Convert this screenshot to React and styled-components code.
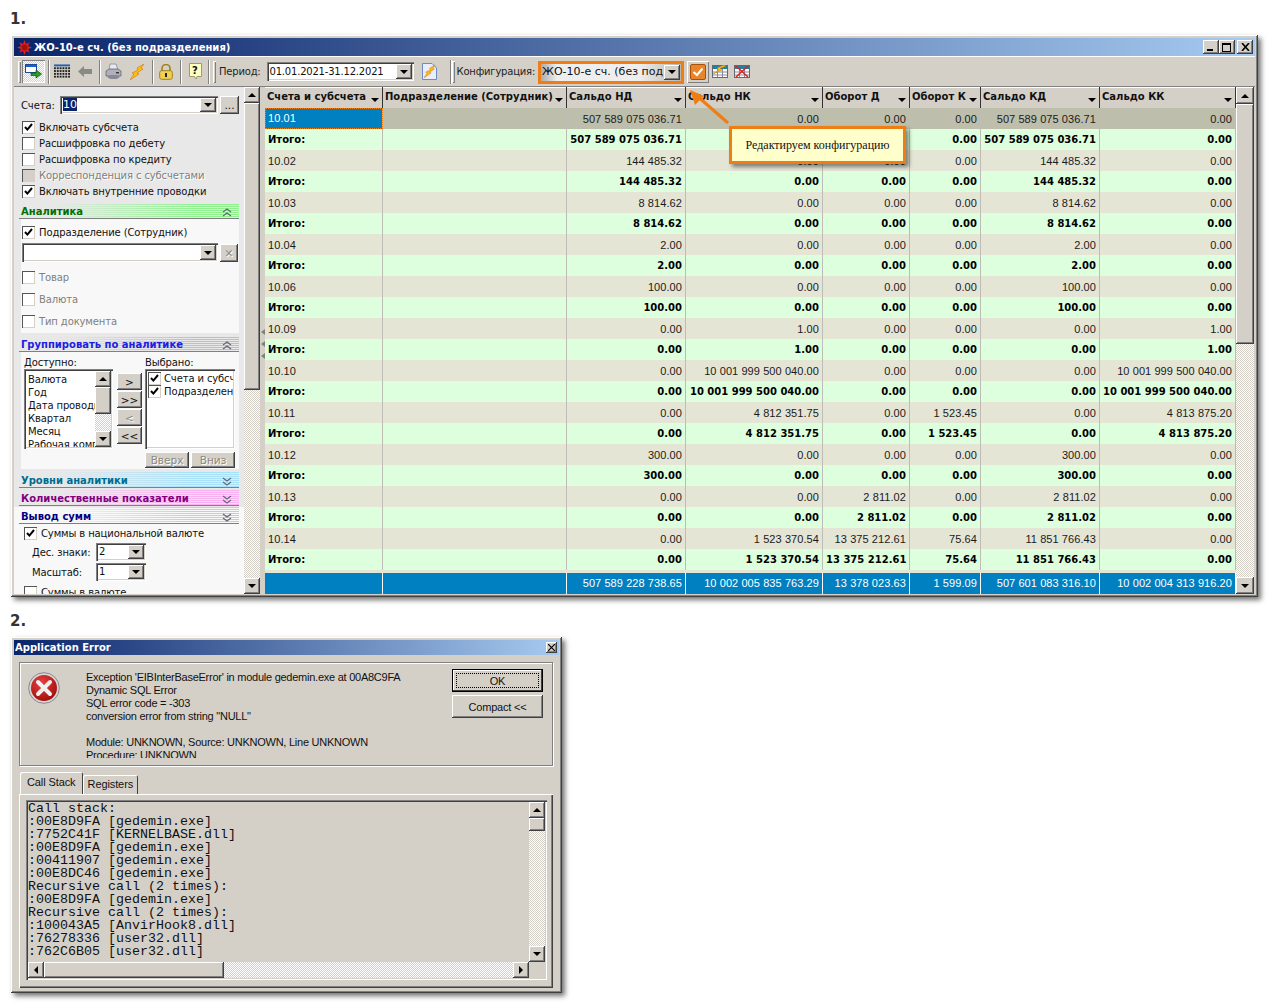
import React from 'react';
import styled, { createGlobalStyle, css } from 'styled-components';

const Global = createGlobalStyle`
  html, body { margin: 0; padding: 0; background: #fff; }
  body { font-family: "Liberation Sans", Arial, sans-serif; font-size: 11px; color: #000; }
  * { box-sizing: border-box; }
`;
const raised = css`box-shadow: inset -1px -1px #404040, inset 1px 1px #fff, inset -2px -2px #808080;`;
const sunken = css`box-shadow: inset 1px 1px #808080, inset 2px 2px #404040, inset -1px -1px #fff, inset -2px -2px #d4d0c8;`;
const UI = `"DejaVu Sans", Verdana, sans-serif`;

const Page = styled.div`width: 1270px; height: 1005px; overflow: hidden; display: flex; flex-direction: column;`;
const Heading = styled.div`
  height: ${p => p.$h}px; padding: ${p => p.$top}px 0 0 10px;
  font: bold 15px ${UI}; color: #333; line-height: 18px;
`;
const Win = styled.div`
  position: relative; margin-left: 11px; width: ${p => p.$w}px; height: ${p => p.$h}px; flex: none;
  background: #d4d0c8; padding: 3px; display: flex; flex-direction: column;
  box-shadow: inset -1px -1px #404040, inset 1px 1px #fff, inset -2px -2px #808080, 3px 3px 5px rgba(0,0,0,.55);
`;
const TitleBar = styled.div`
  height: ${p => p.$h}px; flex: none; display: flex; align-items: center; padding: 0 2px 0 ${p => p.$pl}px; gap: 2px;
  background: linear-gradient(to right, #0a246a, #a6caf0);
`;
const TitleText = styled.div`font: bold ${p => p.$s}px ${UI}; color: #fff; flex: 1; white-space: nowrap;`;
const CapBtn = styled.div`
  width: ${p => p.$w}px; height: ${p => p.$h}px; background: #d4d0c8; ${raised}; margin-left: ${p => p.$ml || 0}px;
  display: flex; align-items: center; justify-content: center; flex: none;
`;
const Toolbar = styled.div`
  height: 31px; flex: none; display: flex; align-items: center; border-bottom: 1px solid #808080; padding: 1px 0 0 4px;
  box-shadow: inset 0 1px #fff; font-family: ${UI}; font-size: 10px; letter-spacing: -.2px; color: #222;
`;
const Grip = styled.div`width: 3px; height: 22px; flex: none; margin-right: ${p => p.$r}px; box-shadow: inset 1px 1px #fff, inset -1px -1px #808080;`;
const Sep = styled.div`width: 2px; height: 24px; flex: none; margin: 0 ${p => p.$r}px 0 ${p => p.$l}px; box-shadow: inset 1px 0 #808080, inset -1px 0 #fff;`;
const ToolIcon = styled.div`
  width: ${p => p.$w || 16}px; height: 20px; display: flex; align-items: center; justify-content: center; flex: none;
`;
const ToolPressed = styled.div`
  width: 23px; height: 23px; display: flex; align-items: center; justify-content: center; flex: none;
  box-shadow: inset 1px 1px #808080, inset -1px -1px #fff;
  background: repeating-conic-gradient(#d4d0c8 0 25%, #fff 0 50%) 0 0/2px 2px;
`;
const ToolRaised = styled.div`
  width: 22px; height: 22px; display: flex; align-items: center; justify-content: center; flex: none; margin-left: 5px;
  box-shadow: inset 1px 1px #fff, inset -1px -1px #808080;
`;
const Label = styled.span`flex: none; margin-right: ${p => p.$r || 0}px; white-space: nowrap; color: ${p => p.$c || '#222'};`;
const AccountLabel = styled.span`width: 40px; flex: none; padding-left: 1px;`;
const Combo = styled.div`
  width: ${p => p.$w}px; height: ${p => p.$h}px; flex: none; display: flex; align-items: center; position: relative;
  background: #fff; padding: 2px; ${sunken}; overflow: hidden;
`;
const ComboValue = styled.div`
  flex: 1; min-width: 0; white-space: nowrap; overflow: hidden; font: ${p => p.$s || 10}px ${UI}; color: #111; padding-left: 1px; line-height: 14px;
`;
const Selected = styled.span`background: #0a246a; color: #fff;`;
const ComboBtn = styled.div`
  width: 16px; height: 100%; background: #d4d0c8; ${raised}; flex: none; display: flex; align-items: center; justify-content: center;
`;
const Tri = styled.div`
  width: 0; height: 0; flex: none;
  ${p => p.$d === 'down' && `border-left:4px solid transparent;border-right:4px solid transparent;border-top:4px solid #000;`}
  ${p => p.$d === 'up' && `border-left:4px solid transparent;border-right:4px solid transparent;border-bottom:4px solid #000;`}
  ${p => p.$d === 'left' && `border-top:4px solid transparent;border-bottom:4px solid transparent;border-right:4px solid #000;`}
  ${p => p.$d === 'right' && `border-top:4px solid transparent;border-bottom:4px solid transparent;border-left:4px solid #000;`}
`;
const ConfigCombo = styled(Combo)`
  background: linear-gradient(to right, #a8a8a8, #eee 12%, #eee 70%, #b8b5ae); box-shadow: none; margin: 1px 0 0;
  outline: 3px solid #f07d14; outline-offset: -1px; padding: 2px 2px 2px 1px; letter-spacing: 0;
`;
const Body = styled.div`flex: 1; min-height: 0; display: flex;`;
const Left = styled.div`
  width: 230px; height: 100%; flex: none; overflow: hidden; background: #f8f8f8; font: 10px ${UI}; letter-spacing: -.12px; color: #111;
  display: flex; flex-direction: column;
`;
const Upper = styled.div`background: #e8e8e8; padding: 9px 5px 0 6px; height: 420px; flex: none; display: flex; flex-direction: column;`;
const Row = styled.div`display: flex; align-items: center; flex: none; height: ${p => p.$h}px; margin: ${p => p.$m || '0'};`;
const Small = styled.button`
  width: ${p => p.$w}px; height: ${p => p.$h}px; border: 0; padding: 0; background: #d4d0c8; ${raised}; flex: none;
  font: 10.5px ${UI}; color: ${p => p.$dis ? '#8a8a84' : '#111'};
  text-shadow: ${p => p.$dis ? '1px 1px #fff' : 'none'}; margin: ${p => p.$m || '0'};
`;
const CheckRow = styled.div`
  display: flex; align-items: center; gap: 4px; height: ${p => p.$h || 16}px; flex: none; white-space: nowrap; margin-top: ${p => p.$mt || 0}px;
  padding-left: ${p => p.$pl ?? 2}px; color: ${p => p.$muted ? '#808080' : '#111'};
  text-shadow: ${p => p.$ghost ? '1px 1px #fff' : 'none'};
`;
const Box = styled.div`
  width: 13px; height: 13px; flex: none; background: ${p => p.$dis ? '#d4d0c8' : '#fff'}; display: flex; align-items: center; justify-content: center;
  box-shadow: inset 1px 1px #555, inset -1px -1px #d4d0c8;
`;
const SecHead = styled.div`
  height: ${p => p.$h || 15}px; flex: none; margin: ${p => p.$m || '0'}; width: 220px; display: flex; align-items: flex-end; justify-content: space-between;
  padding: 0 7px 0 2px; font: bold 10px ${UI}; letter-spacing: 0; color: ${p => p.$c}; line-height: 13px;
  border-bottom: 1px solid #808080;
  background: linear-gradient(to right, ${p => p.$bg} 15%, transparent 80%), repeating-linear-gradient(to bottom, ${p => p.$st} 0 1px, ${p => p.$bg} 1px 2px);
`;
const SecBody = styled.div`
  background: #f8f8f8; width: 218px; margin-left: 1px; flex: none; display: flex; flex-direction: column; padding: ${p => p.$p}; height: ${p => p.$h}px;
`;
const GroupGrid = styled.div`display: grid; grid-template-columns: 89px 32px 90px; align-items: start;`;
const Cap = styled.div`height: 13px; line-height: 13px;`;
const List = styled.div`
  width: ${p => p.$w}px; height: 80px; background: #fff; ${sunken}; display: flex; overflow: hidden; padding: 2px;
`;
const ListItems = styled.div`flex: 1; min-width: 0; overflow: hidden; padding: ${p => p.$p}; line-height: 13px; white-space: nowrap;`;
const MiniCheck = styled.div`display: flex; align-items: center; gap: 3px; height: 13px; white-space: nowrap;`;
const BtnCol = styled.div`display: flex; flex-direction: column; gap: 1px; padding: 4px 0 0 4px;`;
const BtnRow = styled.div`display: flex; gap: 2px; margin-top: 3px; grid-column: 3;`;
const LowerBody = styled.div`padding: 0 0 0 10px; display: flex; flex-direction: column;`;
const NumLabel = styled.span`width: 72px; padding-left: 8px; flex: none; white-space: nowrap;`;

const VScroll = styled.div`
  width: ${p => p.$w}px; flex: none; display: flex; flex-direction: column; height: ${p => p.$h ? p.$h + 'px' : '100%'};
  background: repeating-conic-gradient(#d4d0c8 0 25%, #fff 0 50%) 0 0/2px 2px;
`;
const HScroll = styled.div`
  height: 16px; flex: none; display: flex; width: ${p => p.$w}px;
  background: repeating-conic-gradient(#d4d0c8 0 25%, #fff 0 50%) 0 0/2px 2px;
`;
const SBtn = styled.div`
  width: ${p => p.$w}px; height: ${p => p.$h}px; flex: none; background: #d4d0c8; ${raised};
  display: flex; align-items: center; justify-content: center;
`;
const Spacer = styled.div`flex: 1;`;
const Splitter = styled.div`
  width: 5px; flex: none; background: #d4d0c8; display: flex; flex-direction: column; align-items: center; justify-content: center; gap: 6px; padding-top: 6px;
`;
const SplitTri = styled.div`width: 0; height: 0; border-top: 3px solid transparent; border-bottom: 3px solid transparent; border-right: 4px solid #808080;`;

const Grid = styled.div`width: 971px; flex: none; display: flex; flex-direction: column; background: #e5e5d5;`;
const COLS = '118px 184px 119px 137px 87px 71px 119px 136px';
const Tr = styled.div`display: grid; grid-template-columns: ${COLS}; height: ${p => p.$h}px; flex: none;`;
const Th = styled.div`
  background: #d4d0c8; border-right: 1px solid #333; box-shadow: inset 0 1px #fff; padding: 4px 0 0 2px; display: flex; justify-content: space-between;
  font: bold 10px ${UI}; color: #111; white-space: nowrap; overflow: hidden;
  & > i { margin: 7px 3px 0 0; }
`;
const Td = styled.div`
  background: ${p => p.$bg}; border-right: 1px solid #bdbdb5; padding: 0 3px 0 3px; white-space: nowrap; overflow: hidden; height: 21px;
  text-align: ${p => p.$first ? 'left' : 'right'}; color: ${p => p.$fg || '#1a1a1a'};
  ${p => p.$bold ? `font: bold 10px/22px ${UI}; color:#000;` : `font: 11px/22px "Liberation Sans", sans-serif; letter-spacing: .08px;`}
  ${p => p.$focus && `outline: 1px dotted #f07d14; outline-offset: -1px; color: #fff; line-height: 21px;`}
`;
const Foot = styled(Tr)`margin-top: 3px;`;
const FootTd = styled.div`
  background: #0080c0; border-right: 1px solid #fff; color: #fff; text-align: right; padding-right: 3px; white-space: nowrap; overflow: hidden;
  font: 11px/21px "Liberation Sans", sans-serif; letter-spacing: .08px;
`;
const Callout = styled.div`
  position: absolute; left: 718px; top: 91px; width: 177px; height: 38px; background: #ffffcc; border: 3px solid #f07d14;
  box-shadow: 3px 3px 4px rgba(0,0,0,.45); display: flex; align-items: center; justify-content: center;
  font: 12px "Liberation Serif", serif; color: #111;
`;
const ArrowLayer = styled.svg`position: absolute; left: 670px; top: 50px; pointer-events: none;`;

/* Error dialog */
const Client = styled.div`flex: 1; padding: 7px 6px 0 5px; display: flex; flex-direction: column; font-family: "Liberation Sans", sans-serif;`;
const MsgGroup = styled.div`
  height: 104px; flex: none; border: 1px solid #808080; box-shadow: 1px 1px #fff, inset 1px 1px #fff; display: flex; padding: 8px 9px 4px 8px;
`;
const MsgIcon = styled.div`width: 58px; flex: none; padding-top: 1px;`;
const MsgText = styled.pre`
  flex: 1; margin: 0; font: 11px/13px "Liberation Sans", sans-serif; letter-spacing: -.25px; color: #111; overflow: hidden; height: 87px;
`;
const Btns = styled.div`width: 91px; flex: none; display: flex; flex-direction: column; gap: 3px; margin-top: -2px;`;
const DlgBtn = styled.button`
  width: 91px; height: 23px; border: 0; padding: 0; background: #d4d0c8; font: 11px "Liberation Sans", sans-serif; letter-spacing: -.2px; color: #111; position: relative;
  box-shadow: ${p => p.$def ? 'inset 0 0 0 1px #000, inset -2px -2px #404040, inset 2px 2px #fff' : 'inset -1px -1px #404040, inset 1px 1px #fff, inset -2px -2px #808080'};
`;
const Focus = styled.div`position: absolute; inset: 4px; border: 1px dotted #000; display: flex; align-items: center; justify-content: center;`;
const Tabs = styled.div`display: flex; align-items: flex-end; height: 22px; margin-top: 6px; padding-left: 1px; flex: none; font-size: 11px; letter-spacing: -.1px;`;
const Tab = styled.div`
  height: ${p => p.$h}px; padding: 0 ${p => p.$pad}px 2px; display: flex; align-items: center; background: #d4d0c8; color: #111;
  box-shadow: inset 1px 1px #fff, inset -1px 0 #404040; border-radius: 2px 2px 0 0; position: relative; z-index: ${p => p.$active ? 1 : 0};
`;
const TabPage = styled.div`
  width: 534px; height: 194px; flex: none; box-shadow: inset 1px 1px #fff, inset -1px -1px #404040, inset -2px -2px #808080; padding: 6px 6px 0 7px;
`;
const Memo = styled.div`
  width: 521px; height: 180px; display: grid; grid-template-columns: 1fr 16px; grid-template-rows: 1fr 16px;
  padding: 2px; ${sunken};
`;
const MemoText = styled.pre`
  margin: 0; padding: 0; font: 13.33px/13px "Liberation Mono", monospace; color: #111; overflow: hidden;
`;

const Check = () => (
  <svg width="9" height="9" viewBox="0 0 9 9"><path d="M1 4 L3.4 6.6 L8 1" fill="none" stroke="#000" strokeWidth="2" /></svg>
);
const Chev = ({ up }) => (
  <svg width="10" height="9" viewBox="0 0 10 9" style={{ marginBottom: 1, flex: 'none' }}>
    <path d={up ? 'M1 4 L5 1 L9 4 M1 8 L5 5 L9 8' : 'M1 1 L5 4 L9 1 M1 5 L5 8 L9 5'} fill="none" stroke="#667" strokeWidth="1.2" />
  </svg>
);
const CB = ({ on, dis, children, muted, ghost, h, pl, mt }) => (
  <CheckRow $muted={muted} $ghost={ghost} $h={h} $pl={pl} $mt={mt}>
    <Box $dis={dis}>{on && <Check />}</Box>
    <span>{children}</span>
  </CheckRow>
);
const Star = () => (
  <svg width="15" height="15" viewBox="0 0 15 15">
    <path d="M7.5 0 L9 4 L12.8 2.2 L11 6 L15 7.5 L11 9 L12.8 12.8 L9 11 L7.5 15 L6 11 L2.2 12.8 L4 9 L0 7.5 L4 6 L2.2 2.2 L6 4 Z" fill="#e02020" />
    <circle cx="7.5" cy="7.5" r="3" fill="#a01010" />
  </svg>
);
const IcoOpen = () => (
  <svg width="17" height="15" viewBox="0 0 17 15">
    <rect x=".5" y=".5" width="11" height="8" fill="#fff" stroke="#1a4a9a" /><rect x="1" y="1" width="10" height="2" fill="#2060c0" />
    <path d="M6 9 H11 V6 L16.5 10 L11 14 V11.5 H6 Z" fill="#28a028" stroke="#105010" strokeWidth=".7" />
  </svg>
);
const IcoGrid = () => (
  <svg width="17" height="15" viewBox="0 0 17 15">
    <rect x="0" y="0" width="17" height="2" fill="#2060b0" />
    {[3, 6, 9, 12].map(y => [0, 3, 6, 9, 12, 15].map(x => <rect key={x + '-' + y} x={x} y={y} width="2" height="2" fill="#222" />))}
  </svg>
);
const IcoBack = () => (
  <svg width="14" height="11" viewBox="0 0 14 11"><path d="M0 5.5 L6 0 V3 H14 V8 H6 V11 Z" fill="#8a8a84" /></svg>
);
const IcoPrint = () => (
  <svg width="17" height="17" viewBox="0 0 17 17">
    <path d="M5 1 H11 L13 7 H4 Z" fill="#e8e8f0" stroke="#889" strokeWidth=".8" />
    <path d="M1 8 L4 6 H13 L16 8 V13 H1 Z" fill="#b0b0b8" stroke="#667" strokeWidth=".8" />
    <ellipse cx="8.5" cy="14" rx="6" ry="2" fill="#889" /><rect x="11" y="9" width="3" height="1.4" fill="#333" />
  </svg>
);
const Bolt = ({ w = 15, h = 16 }) => (
  <svg width={w} height={h} viewBox="0 0 15 16"><path d="M14 0 L7 4 L8 6 L2 9 L4 10 L0 16 L9 10 L7 9 L13 5 L11 4 Z" fill="#f8c010" stroke="#d87010" strokeWidth=".6" /></svg>
);
const IcoLock = () => (
  <svg width="14" height="16" viewBox="0 0 14 16">
    <path d="M3 7 V4.5 a4 4 0 0 1 8 0 V7" fill="none" stroke="#a08020" strokeWidth="1.6" />
    <rect x=".7" y="6.7" width="12.6" height="8.6" rx="2" fill="#f0d050" stroke="#a08020" />
    <rect x="6" y="9" width="2" height="4" fill="#222" />
  </svg>
);
const IcoHelp = () => (
  <svg width="15" height="17" viewBox="0 0 15 17">
    <path d="M1.5 .5 H13.5 V13.5 H9 L8 16 L6.5 13.5 H1.5 Z" fill="#ffffc0" stroke="#a09870" />
    <text x="4" y="11" fontFamily="DejaVu Sans" fontWeight="bold" fontSize="10" fill="#111">?</text>
  </svg>
);
const IcoDocBolt = () => (
  <svg width="15" height="17" viewBox="0 0 15 17">
    <path d="M.5 .5 H10 L14.5 5 V16.5 H.5 Z" fill="#e8eefc" stroke="#7088c8" />
    <g transform="translate(2 2) scale(.8)"><path d="M14 0 L7 4 L8 6 L2 9 L4 10 L0 16 L9 10 L7 9 L13 5 L11 4 Z" fill="#f8c010" stroke="#d87010" strokeWidth=".6" /></g>
  </svg>
);
const IcoConfirm = () => (
  <svg width="16" height="16" viewBox="0 0 16 16">
    <rect x=".5" y=".5" width="15" height="15" rx="1.5" fill="#e8842a" stroke="#a85010" />
    <path d="M3.5 8 L7 11 L12.5 4.5" fill="none" stroke="#fff" strokeWidth="2" />
  </svg>
);
const TableBase = ({ children }) => (
  <svg width="16" height="13" viewBox="0 0 16 13">
    <rect x=".5" y=".5" width="15" height="12" fill="#fff" stroke="#667" /><rect x="1" y="1" width="14" height="3" fill="#2080a0" />
    <path d="M1 7 H15 M1 10 H15 M5.5 4 V12 M10.5 4 V12" stroke="#889" />
    {children}
  </svg>
);
const IcoTableEdit = () => <TableBase><path d="M12 0 L5 3 L7 5 L1 9 L10 5 L8 3.4 L14 1 Z" fill="#f8c010" stroke="#d87010" strokeWidth=".5" /></TableBase>;
const IcoTableDel = () => <TableBase><path d="M2 1 L14 12 M14 1 L2 12" stroke="#e02020" strokeWidth="1.6" /></TableBase>;
const IcoErr = () => (
  <svg width="32" height="32" viewBox="0 0 32 32">
    <defs><radialGradient id="e" cx=".4" cy=".3" r=".8"><stop offset="0" stopColor="#e84040" /><stop offset="1" stopColor="#9c0808" /></radialGradient></defs>
    <circle cx="16" cy="16" r="15.3" fill="#d8d8d8" stroke="#888" />
    <circle cx="16" cy="16" r="13" fill="url(#e)" />
    <path d="M10 10 L22 22 M22 10 L10 22" stroke="#f0f0f0" strokeWidth="4" strokeLinecap="round" />
  </svg>
);

const rows = [
  ['10.01', '507 589 075 036.71', '0.00', '0.00', '0.00', '507 589 075 036.71', '0.00'],
  ['10.02', '144 485.32', '0.00', '0.00', '0.00', '144 485.32', '0.00'],
  ['10.03', '8 814.62', '0.00', '0.00', '0.00', '8 814.62', '0.00'],
  ['10.04', '2.00', '0.00', '0.00', '0.00', '2.00', '0.00'],
  ['10.06', '100.00', '0.00', '0.00', '0.00', '100.00', '0.00'],
  ['10.09', '0.00', '1.00', '0.00', '0.00', '0.00', '1.00'],
  ['10.10', '0.00', '10 001 999 500 040.00', '0.00', '0.00', '0.00', '10 001 999 500 040.00'],
  ['10.11', '0.00', '4 812 351.75', '0.00', '1 523.45', '0.00', '4 813 875.20'],
  ['10.12', '300.00', '0.00', '0.00', '0.00', '300.00', '0.00'],
  ['10.13', '0.00', '0.00', '2 811.02', '0.00', '2 811.02', '0.00'],
  ['10.14', '0.00', '1 523 370.54', '13 375 212.61', '75.64', '11 851 766.43', '0.00'],
];
const heads = ['Счета и субсчета', 'Подразделение (Сотрудник)', 'Сальдо НД', 'Сальдо НК', 'Оборот Д', 'Оборот К', 'Сальдо КД', 'Сальдо КК'];
const foot = ['', '', '507 589 228 738.65', '10 002 005 835 763.29', '13 378 023.63', '1 599.09', '507 601 083 316.10', '10 002 004 313 916.20'];
const stack = `Call stack:
:00E8D9FA [gedemin.exe]
:7752C41F [KERNELBASE.dll]
:00E8D9FA [gedemin.exe]
:00411907 [gedemin.exe]
:00E8DC46 [gedemin.exe]
Recursive call (2 times):
:00E8D9FA [gedemin.exe]
Recursive call (2 times):
:100043A5 [AnvirHook8.dll]
:76278336 [user32.dll]
:762C6B05 [user32.dll]`;
const msg = `Exception 'EIBInterBaseError' in module gedemin.exe at 00A8C9FA
Dynamic SQL Error
SQL error code = -303
conversion error from string "NULL"

Module: UNKNOWN, Source: UNKNOWN, Line UNKNOWN
Procedure: UNKNOWN`;

const MainWindow = () => (
  <Win $w={1247} $h={562}>
    <TitleBar $h={18} $pl={3}>
      <Star />
      <TitleText $s={10}>ЖО-10-е сч. (без подразделения)</TitleText>
      <CapBtn $w={16} $h={14}><svg width="8" height="8"><rect x="0" y="6" width="6" height="2" fill="#000" /></svg></CapBtn>
      <CapBtn $w={16} $h={14} $ml={-2}><svg width="10" height="9"><rect x=".5" y=".5" width="8" height="8" fill="none" stroke="#000" /><rect width="9" height="2" fill="#000" /></svg></CapBtn>
      <CapBtn $w={16} $h={14}><svg width="9" height="8"><path d="M1 0 L8 8 M8 0 L1 8" stroke="#000" strokeWidth="1.6" /></svg></CapBtn>
    </TitleBar>
    <Toolbar>
      <Grip $r={1} />
      <ToolPressed><IcoOpen /></ToolPressed>
      <Sep $l={3} $r={4} />
      <ToolIcon><IcoGrid /></ToolIcon>
      <ToolIcon $w={29}><IcoBack /></ToolIcon>
      <Sep $l={0} $r={4} />
      <ToolIcon $w={17}><IcoPrint /></ToolIcon>
      <ToolIcon $w={30}><Bolt /></ToolIcon>
      <Sep $l={0} $r={3} />
      <ToolIcon $w={18}><IcoLock /></ToolIcon>
      <Sep $l={5} $r={5} />
      <ToolIcon $w={16}><IcoHelp /></ToolIcon>
      <Sep $l={5} $r={3} />
      <Grip $r={3} />
      <Label $r={6}>Период:</Label>
      <Combo $w={147} $h={19}>
        <ComboValue>01.01.2021-31.12.2021</ComboValue>
        <ComboBtn><Tri $d="down" /></ComboBtn>
      </Combo>
      <ToolIcon $w={32}><IcoDocBolt /></ToolIcon>
      <Sep $l={4} $r={0} />
      <Grip $r={2} />
      <Label $r={5}>Конфигурация:</Label>
      <ConfigCombo $w={142} $h={19}>
        <ComboValue $s={11}>ЖО-10-е сч. (без под</ComboValue>
        <ComboBtn><Tri $d="down" /></ComboBtn>
      </ConfigCombo>
      <ToolRaised><IcoConfirm /></ToolRaised>
      <ToolIcon $w={22}><IcoTableEdit /></ToolIcon>
      <ToolIcon $w={22}><IcoTableDel /></ToolIcon>
    </Toolbar>
    <Body>
      <Left>
        <Upper>
          <Row $h={18}>
            <AccountLabel>Счета:</AccountLabel>
            <Combo $w={158} $h={18}>
              <ComboValue $s={11}><Selected>10</Selected></ComboValue>
              <ComboBtn><Tri $d="down" /></ComboBtn>
            </Combo>
            <Small $w={19} $h={18} $m="0 0 0 2px">...</Small>
          </Row>
          <Row $h={5} />
          <CB on>Включать субсчета</CB>
          <CB>Расшифровка по дебету</CB>
          <CB>Расшифровка по кредиту</CB>
          <CB dis muted ghost>Корреспонденция с субсчетами</CB>
          <CB on>Включать внутренние проводки</CB>
          <SecHead $m="5px 0 0 -1px" $c="#007000" $bg="#e8e8e8" $st="#90f090">Аналитика<Chev up /></SecHead>
          <SecBody $h={114} $p="5px 0 0 1px">
            <CB on pl={0}>Подразделение (Сотрудник)</CB>
            <Row $h={19} $m="3px 0 0 0">
              <Combo $w={196} $h={19}><ComboValue /><ComboBtn><Tri $d="down" /></ComboBtn></Combo>
              <Small $w={18} $h={18} $dis $m="0 0 0 2px">✕</Small>
            </Row>
            <Row $h={4} />
            <CB muted h={22} pl={0}>Товар</CB>
            <CB muted h={22} pl={0}>Валюта</CB>
            <CB muted h={22} pl={0}>Тип документа</CB>
          </SecBody>
          <SecHead $m="4px 0 0 -1px" $c="#2020e0" $bg="#e8e8e8" $st="#b8b8f8">Группировать по аналитике<Chev up /></SecHead>
          <SecBody $h={117} $p="4px 0 0 3px">
            <GroupGrid>
              <Cap>Доступно:</Cap><div /><Cap>Выбрано:</Cap>
              <List $w={89}>
                <ListItems $p="2px 0 0 2px">Валюта<br />Год<br />Дата проводки<br />Квартал<br />Месяц<br />Рабочая компания</ListItems>
                <VScroll $w={16}>
                  <SBtn $w={16} $h={16}><Tri $d="up" /></SBtn>
                  <SBtn $w={16} $h={27} />
                  <Spacer />
                  <SBtn $w={16} $h={16}><Tri $d="down" /></SBtn>
                </VScroll>
              </List>
              <BtnCol>
                <Small $w={25} $h={17}>&gt;</Small>
                <Small $w={25} $h={17}>&gt;&gt;</Small>
                <Small $w={25} $h={17} $dis>&lt;</Small>
                <Small $w={25} $h={17}>&lt;&lt;</Small>
              </BtnCol>
              <List $w={90}>
                <ListItems $p="1px 0 0 1px">
                  <MiniCheck><Box><Check /></Box>Счета и субсчета</MiniCheck>
                  <MiniCheck><Box><Check /></Box>Подразделение</MiniCheck>
                </ListItems>
              </List>
              <BtnRow>
                <Small $w={44} $h={16} $dis>Вверх</Small>
                <Small $w={44} $h={16} $dis>Вниз</Small>
              </BtnRow>
            </GroupGrid>
          </SecBody>
          <SecHead $h={16} $m="3px 0 0 -1px" $c="#006c90" $bg="#e8e8e8" $st="#a8e0f8">Уровни аналитики<Chev /></SecHead>
          <SecHead $h={16} $m="2px 0 0 -1px" $c="#800080" $bg="#e8e8e8" $st="#f8b0f0">Количественные показатели<Chev /></SecHead>
        </Upper>
        <SecHead $h={17} $m="0 0 0 5px" $c="#000080" $bg="#f8f8f8" $st="#c0cce0">Вывод сумм<Chev /></SecHead>
        <LowerBody>
          <CB on h={18} pl={0}>Суммы в национальной валюте</CB>
          <Row $h={18} $m="1px 0 0 0">
            <NumLabel>Дес. знаки:</NumLabel>
            <Combo $w={50} $h={18}><ComboValue>2</ComboValue><ComboBtn><Tri $d="down" /></ComboBtn></Combo>
          </Row>
          <Row $h={18} $m="2px 0 0 0">
            <NumLabel>Масштаб:</NumLabel>
            <Combo $w={50} $h={18}><ComboValue>1</ComboValue><ComboBtn><Tri $d="down" /></ComboBtn></Combo>
          </Row>
          <CB h={18} pl={0} mt={2}>Суммы в валюте</CB>
        </LowerBody>
      </Left>
      <VScroll $w={16}>
        <SBtn $w={16} $h={16}><Tri $d="up" /></SBtn>
        <SBtn $w={16} $h={287} />
        <Spacer />
        <SBtn $w={16} $h={16}><Tri $d="down" /></SBtn>
      </VScroll>
      <Splitter><SplitTri /><SplitTri /><SplitTri /></Splitter>
      <Grid>
        <Tr $h={21}>
          {heads.map(h => <Th key={h}>{h}<Tri as="i" $d="down" /></Th>)}
        </Tr>
        {rows.map((r, i) => (
          <React.Fragment key={r[0]}>
            <Tr $h={21}>
              <Td $first $bg={i === 0 ? '#0080c0' : '#e5e5d5'} $focus={i === 0}>{r[0]}</Td>
              <Td $bg={i === 0 ? '#bebeac' : '#e5e5d5'} />
              {r.slice(1).map((v, j) => <Td key={j} $bg={i === 0 ? '#bebeac' : '#e5e5d5'}>{v}</Td>)}
            </Tr>
            <Tr $h={21}>
              <Td $first $bold $bg="#ddffdd">Итого:</Td>
              <Td $bg="#ddffdd" />
              {r.slice(1).map((v, j) => <Td key={j} $bold $bg="#ddffdd">{v}</Td>)}
            </Tr>
          </React.Fragment>
        ))}
        <Foot $h={21}>{foot.map((f, i) => <FootTd key={i}>{f}</FootTd>)}</Foot>
      </Grid>
      <VScroll $w={18}>
        <SBtn $w={18} $h={17}><Tri $d="up" /></SBtn>
        <SBtn $w={18} $h={240} />
        <Spacer />
        <SBtn $w={18} $h={17}><Tri $d="down" /></SBtn>
      </VScroll>
    </Body>
    <ArrowLayer width="60" height="50" viewBox="0 0 60 50">
      <path d="M47 38 L15 10" stroke="#f07d14" strokeWidth="3" />
      <path d="M9 5 L23 11 L14 20 Z" fill="#f07d14" />
    </ArrowLayer>
    <Callout>Редактируем конфигурацию</Callout>
  </Win>
);

const ErrorWindow = () => (
  <Win $w={551} $h={356}>
    <TitleBar $h={15} $pl={1}>
      <TitleText $s={10}>Application Error</TitleText>
      <CapBtn $w={11} $h={11}><svg width="7" height="7"><path d="M0 0 L7 7 M7 0 L0 7" stroke="#000" strokeWidth="1.2" /></svg></CapBtn>
    </TitleBar>
    <Client>
      <MsgGroup>
        <MsgIcon><IcoErr /></MsgIcon>
        <MsgText>{msg}</MsgText>
        <Btns>
          <DlgBtn $def><Focus>OK</Focus></DlgBtn>
          <DlgBtn>Compact &lt;&lt;</DlgBtn>
        </Btns>
      </MsgGroup>
      <Tabs>
        <Tab $active $h={22} $pad={7}>Call Stack</Tab>
        <Tab $h={19} $pad={5}>Registers</Tab>
      </Tabs>
      <TabPage>
        <Memo>
          <MemoText>{stack}</MemoText>
          <VScroll $w={16} $h={160}>
            <SBtn $w={16} $h={16}><Tri $d="up" /></SBtn>
            <SBtn $w={16} $h={13} />
            <Spacer />
            <SBtn $w={16} $h={16}><Tri $d="down" /></SBtn>
          </VScroll>
          <HScroll $w={501}>
            <SBtn $w={16} $h={16}><Tri $d="left" /></SBtn>
            <SBtn $w={180} $h={16} />
            <Spacer />
            <SBtn $w={16} $h={16}><Tri $d="right" /></SBtn>
          </HScroll>
        </Memo>
      </TabPage>
    </Client>
  </Win>
);

export default function App() {
  return (
    <Page>
      <Global />
      <Heading $h={35} $top={10}>1.</Heading>
      <MainWindow />
      <Heading $h={40} $top={15}>2.</Heading>
      <ErrorWindow />
    </Page>
  );
}
